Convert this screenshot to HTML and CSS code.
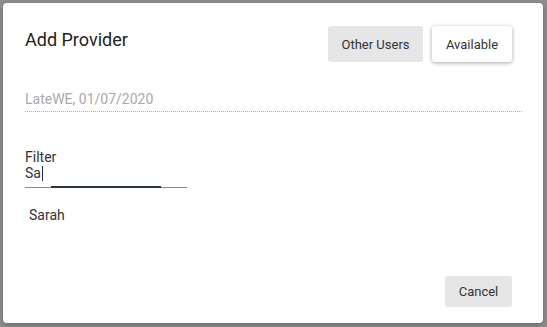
FILE: index.html
```html
<!DOCTYPE html>
<html>
<head>
<meta charset="utf-8">
<link rel="stylesheet" href="styles.css">
</head>
<body>
<div class="dialog">
  <div class="header">
    <div class="title">Add Provider</div>
    <div class="actions">
      <button class="btn btn-flat btn-other">Other Users</button>
      <button class="btn btn-raised btn-available">Available</button>
    </div>
  </div>
  <div class="date-field">LateWE, 01/07/2020</div>
  <div class="filter">
    <div class="filter-label">Filter</div>
    <div class="filter-input">Sa<span class="caret"></span></div>
    <div class="filter-line"><span class="filter-focus"></span></div>
  </div>
  <div class="result">Sarah</div>
  <div class="footer">
    <button class="btn btn-flat btn-cancel">Cancel</button>
  </div>
</div>
</body>
</html>
```
FILE: styles.css
```css
html, body {
  margin: 0;
  padding: 0;
}
body {
  width: 547px;
  height: 327px;
  background: #8e8e8e;
  font-family: Roboto, "Liberation Sans", sans-serif;
  overflow: hidden;
}
.dialog {
  box-sizing: border-box;
  margin: 3px 0 0 3px;
  width: 540px;
  height: 320px;
  background: #fff;
  border-radius: 4px;
  box-shadow: 0 2px 6px rgba(0,0,0,0.25);
  padding: 23px 21px 16px 22px;
  display: flex;
  flex-direction: column;
}
.header {
  display: flex;
  justify-content: space-between;
  align-items: flex-start;
  height: 36px;
}
.title {
  margin-top: 2px;
  font-size: 18px;
  line-height: 24px;
  color: #222;
}
.actions {
  display: flex;
  gap: 9px;
  margin-right: 10px;
}
.btn {
  font-family: Roboto, "Liberation Sans", sans-serif;
  font-size: 13px;
  color: #333;
  border: none;
  border-radius: 3px;
  padding: 0;
  height: 36px;
}
.btn-flat {
  background: #e6e6e6;
}
.btn-raised {
  background: #fff;
  box-shadow: 0 1px 4px rgba(0,0,0,0.35);
}
.btn-other { width: 95px; }
.btn-available { width: 80px; }
.date-field {
  margin-top: 29px;
  font-size: 14px;
  line-height: 16px;
  color: #aaa;
  padding-bottom: 4px;
  border-bottom: 1px dotted #b0b0b0;
}
.filter {
  margin-top: 37px;
  width: 162px;
  font-size: 14px;
  line-height: 16px;
  color: #333;
}
.filter-input {
  display: flex;
  align-items: center;
  height: 16px;
}
.caret {
  display: inline-block;
  width: 1px;
  height: 15px;
  background: #1c2a52;
  margin-left: 1px;
}
.filter-line {
  margin-top: 6px;
  height: 1px;
  background: #8a8a8a;
  position: relative;
}
.filter-focus {
  position: absolute;
  left: 26px;
  top: -1px;
  width: 110px;
  height: 2px;
  background: #2a3448;
}
.result {
  margin-top: 19px;
  padding-left: 4px;
  font-size: 14px;
  line-height: 16px;
  color: #333;
}
.footer {
  margin-top: auto;
  display: flex;
  justify-content: flex-end;
  padding-right: 10px;
}
.btn-cancel {
  width: 67px;
  height: 31px;
}
```
